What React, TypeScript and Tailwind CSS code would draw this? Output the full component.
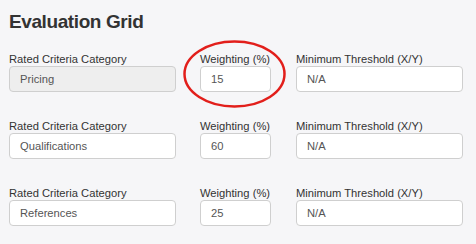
import React from 'react'

type Row = { category: string; weight: string; threshold: string; locked?: boolean }

const rows: Row[] = [
  { category: 'Pricing', weight: '15', threshold: 'N/A', locked: true },
  { category: 'Qualifications', weight: '60', threshold: 'N/A' },
  { category: 'References', weight: '25', threshold: 'N/A' },
]

const font = { fontFamily: '"Liberation Sans", Arial, sans-serif' }

function Field({ label, value, width, locked }: { label: string; value: string; width: string; locked?: boolean }) {
  return (
    <div className={`flex flex-col ${width}`}>
      <label className="text-[11.2px] leading-[14px] text-[#333]">{label}</label>
      <div
        className={`h-[26px] rounded-[4px] border border-[#cfcfcf] pl-[10px] text-[11.2px] leading-[24px] text-[#555] ${
          locked ? 'bg-[#eeeeee]' : 'bg-white'
        }`}
      >
        {value}
      </div>
    </div>
  )
}

export default function App() {
  return (
    <div className="relative h-[244px] w-[476px] overflow-hidden bg-[#f6f6f8] pl-[9px] pt-[10px]" style={font}>
      <h1 className="text-[19px] font-bold leading-[24px] tracking-[-0.4px] text-[#333]">Evaluation Grid</h1>
      <div className="mt-[18px] flex flex-col gap-[27px]">
        {rows.map((r) => (
          <div key={r.category} className="flex">
            <Field label="Rated Criteria Category" value={r.category} width="w-[167px]" locked={r.locked} />
            <div className="ml-[24px]">
              <Field label="Weighting (%)" value={r.weight} width="w-[71px]" />
            </div>
            <div className="ml-[25px]">
              <Field label="Minimum Threshold (X/Y)" value={r.threshold} width="w-[167px]" />
            </div>
          </div>
        ))}
      </div>
      <svg className="pointer-events-none absolute left-0 top-0" width="476" height="244">
        <ellipse cx="234.5" cy="74" rx="50" ry="32.5" fill="none" stroke="#e21f1b" strokeWidth="2.5" />
      </svg>
    </div>
  )
}
